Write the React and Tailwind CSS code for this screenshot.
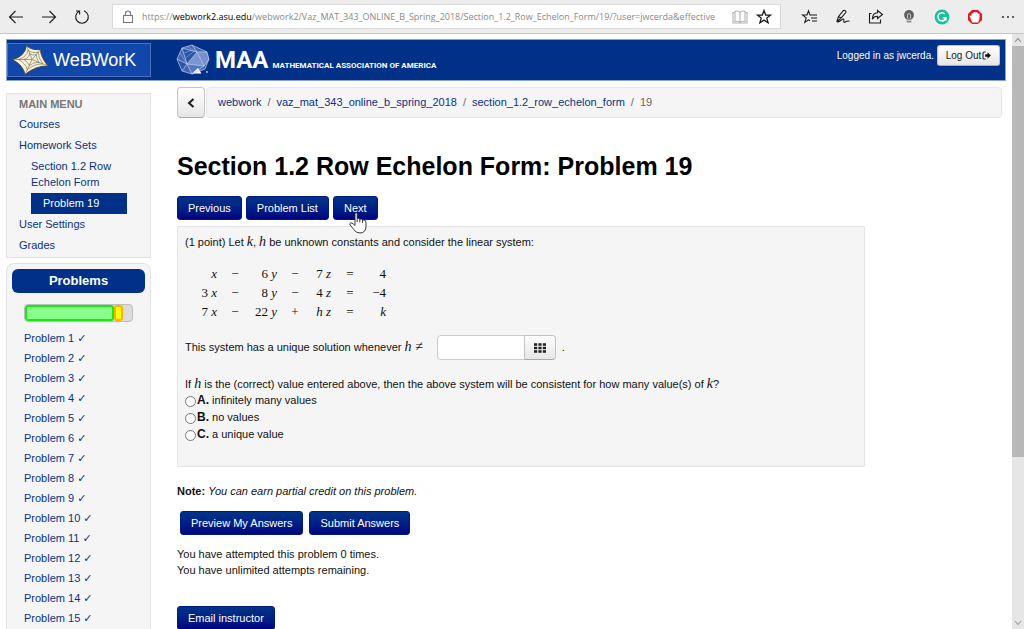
import React from "react";

const primary =
  "h-6 rounded-[3px] border border-[#001a80] bg-linear-to-b from-[#003388] to-[#000080] px-[10px] text-[11px] leading-[22px] text-white";
const light =
  "border border-[#c4c4c4] border-b-[#a8a8a8] bg-linear-to-b from-white to-[#e6e6e6]";

function Icon({ w, h, children, className = "" }) {
  return (
    <svg
      width={w}
      height={h}
      viewBox={`0 0 ${w} ${h}`}
      fill="none"
      stroke="#1c1c1c"
      strokeWidth="1.1"
      aria-hidden="true"
      className={`shrink-0 ${className}`}
    >
      {children}
    </svg>
  );
}

function ToolButton({ label, children }) {
  return (
    <button type="button" aria-label={label} className="flex h-6 w-6 items-center justify-center">
      {children}
    </button>
  );
}

const star = "M8 1.5 L9.7 6 L14.5 6.2 L10.8 9.1 L12.1 13.8 L8 11.1 L3.9 13.8 L5.2 9.1 L1.5 6.2 L6.3 6 Z";

function BrowserBar() {
  return (
    <div className="flex h-[34px] shrink-0 items-center border-b border-[#c6c6c6] bg-[#ededed] pr-1 pl-1">
      <div className="flex w-[108px] items-center gap-[9px]">
        <ToolButton label="Back">
          <Icon w={16} h={16}><path d="M15 8H1.5M7.5 2L1.5 8L7.5 14" /></Icon>
        </ToolButton>
        <ToolButton label="Forward">
          <Icon w={16} h={16}><path d="M1 8H14.5M8.5 2L14.5 8L8.5 14" /></Icon>
        </ToolButton>
        <ToolButton label="Refresh">
          <Icon w={16} h={16}><path d="M5.2 2.3A6.3 6.3 0 1 0 10.8 2.3M2 2H5.6V5.5M10.8 2.3L10 1.6" /></Icon>
        </ToolButton>
      </div>
      <div className="flex h-[25px] min-w-0 flex-1 items-center border border-[#d9d9d9] bg-white pr-1 pl-2">
        <Icon w={14} h={16}>
          <g stroke="#777"><rect x="2.5" y="6.5" width="9" height="7" /><path d="M4.5 6.5V4.5a2.5 2.5 0 0 1 5 0V6.5" /></g>
        </Icon>
        <div className="ml-[7px] min-w-0 flex-1 overflow-hidden font-['Open_Sans',sans-serif] text-[9px] leading-4 whitespace-nowrap text-[#8a8a8a]">
          https://<span className="text-black">webwork2.asu.edu</span>
          /webwork2/Vaz_MAT_343_ONLINE_B_Spring_2018/Section_1.2_Row_Echelon_Form/19/?user=jwcerda&amp;effective
        </div>
        <ToolButton label="Reading view">
          <Icon w={16} h={14}>
            <g stroke="#b5b5b5"><path d="M8 2.5V12.5M8 2.5C6.5 1 4 1 3 1.5V11.5C5 11 7 11.3 8 12.5C9 11.3 11 11 13 11.5V1.5C12 1 9.5 1 8 2.5M3 2.5H1V13H15V2.5H13" /></g>
          </Icon>
        </ToolButton>
        <ToolButton label="Add to favorites"><Icon w={16} h={16}><path d={star} strokeWidth="1.3" /></Icon></ToolButton>
      </div>
      <div className="flex items-center gap-[9px] pl-[17px]">
        <ToolButton label="Favorites">
          <Icon w={18} h={16}>
            <path d="M10 6H9L7.5 1.8L6 6H1.5L5.2 8.9L3.8 13.4L7.5 10.8L9 11.8M10 6H16M10 9H16M11 12H16" />
          </Icon>
        </ToolButton>
        <ToolButton label="Web notes">
          <Icon w={16} h={16}>
            <path d="M2 12L3.5 7.5L8.5 1.5C9.5 .7 11.5 2.2 10.8 3.5L6 9L2 12.5C4 14.5 7 9.5 8.5 10C9.8 10.5 7.8 13.3 9.5 13.2C11 13 11.5 11.5 14.5 12.2M3.5 7.5L6 9" />
          </Icon>
        </ToolButton>
        <ToolButton label="Share">
          <Icon w={16} h={16}>
            <path d="M3.5 4.5H1.5V14H12.5V10.5M9.5 1.5L14.5 5.5L9.5 9.5V7.3C7 7.2 5.3 8.3 4.3 10.3C4.4 6.3 6.5 3.9 9.5 3.8Z" />
          </Icon>
        </ToolButton>
        <ToolButton label="Turn off the lights">
          <Icon w={14} h={16}>
            <circle cx="7" cy="6" r="4.9" fill="#606060" stroke="none" />
            <path d="M4.7 9H9.3V13.5H4.7Z" fill="#888" stroke="none" />
            <path d="M5.5 5.3V9M8.5 5.3V9M5.5 5.3Q7 4 8.5 5.3M4.7 11.5H9.3" stroke="#ddd" strokeWidth=".8" />
          </Icon>
        </ToolButton>
        <ToolButton label="Grammarly">
          <Icon w={16} h={16}>
            <circle cx="8" cy="8" r="7.4" fill="#15c39a" stroke="none" />
            <path d="M11 5A4.1 4.1 0 1 0 12 8.8H8.7M12 8.8V11.5" stroke="#fff" strokeWidth="1.5" />
          </Icon>
        </ToolButton>
        <ToolButton label="Ad blocker">
          <Icon w={16} h={16}>
            <path d="M5 1H11L15 5V11L11 15H5L1 11V5Z" fill="#e8141b" stroke="none" />
            <path d="M5.4 4.5V8.5L4 8L5.8 12.6H10.6L11.6 9V4.8M7.5 3V8.5M9.6 3.3V8.5" fill="#fff" stroke="#fff" strokeWidth="1.9" />
          </Icon>
        </ToolButton>
        <ToolButton label="More">
          <Icon w={16} h={16}>
            <g fill="#1c1c1c" stroke="none"><circle cx="3" cy="8" r=".9" /><circle cx="8" cy="8" r=".9" /><circle cx="13" cy="8" r=".9" /></g>
          </Icon>
        </ToolButton>
      </div>
    </div>
  );
}

function WebLogo() {
  return (
    <svg width="37" height="30" viewBox="0 0 37 30" aria-hidden="true" className="shrink-0">
      <path d="M14.5 .5Q19 5.5 28.5 4.5Q28.5 12 36 21Q24 20.5 13 29.5Q11.5 20.5 .5 14.5Q13 11.5 14.5 .5Z" fill="#f5f0d6" stroke="#45442f" strokeWidth=".9" />
      <g fill="none" stroke="#6d6b52" strokeWidth=".6">
        <path d="M14.5 .5L20 14.5L28.5 4.5M36 21L20 14.5L13 29.5M20 14.5L.5 14.5" />
        <path d="M16 5Q19.5 8.5 26.2 7.2Q26.2 13 31 19Q23 18.5 15.2 24.7Q14 18.5 6.5 14.5Q15 12 16 5Z" />
        <path d="M17.5 8.5Q20 11 24.2 9.6Q24.3 13.5 27 17.3Q22 17 17.2 20.5Q16 17 12 14.5Q17 13 17.5 8.5Z" />
      </g>
    </svg>
  );
}

function MaaLogo() {
  return (
    <svg width="34" height="34" viewBox="0 0 34 34" aria-hidden="true" className="shrink-0">
      <path d="M16 2L31 9L33 16L29 26L16 31L6 28L1 16L6 5Z" fill="#4266b4" />
      <path d="M21 9L31 9L33 16L28 23Z" fill="#7590cf" />
      <path d="M21 9L11 21L28 23Z" fill="#7b96d3" />
      <path d="M11 21L6 5L21 9ZM11 21L1 16L6 28Z" fill="#2b55a8" />
      <path d="M11 21L28 23L16 31Z" fill="#5577bf" />
      <path d="M22 25L25.500 30.500H16Z" fill="#fff" />
      <g fill="none" stroke="#c3d1ee" strokeWidth=".7">
        <path d="M16 2L31 9L33 16L29 26L16 31L6 28L1 16L6 5Z" />
        <path d="M6 5L21 9L16 2M21 9L31 9M21 9L11 21L6 5M11 21L1 16M11 21L6 28M11 21L16 31L28 23L21 9M28 23L33 16M28 23L11 21" />
        <path d="M4 10L11 21M11 3.500L21 9M8 10L15 7.500M9.500 15L18 8.300" strokeWidth=".4" />
      </g>
      <circle cx="31" cy="29" r="1" fill="#a9bce0" />
    </svg>
  );
}

function Banner() {
  return (
    <header className="flex h-[42px] items-center justify-between border border-[#8ba2cc] bg-[#003087] pr-[5px]">
      <div className="flex items-center">
        <a href="#home" className="flex h-[34px] w-36 items-center gap-1 border border-[#4a70be] bg-[#1147ab] pl-1 text-lg text-white">
          <WebLogo />
          WeBWorK
        </a>
        <a href="#maa" className="ml-[25px] flex items-center text-white">
          <MaaLogo />
          <span className="ml-[5px] flex items-baseline gap-1 font-['Roboto','Liberation_Sans',sans-serif] font-bold">
            <span className="text-[24px] leading-[34px]">MAA</span>
            <span className="text-[8px]">MATHEMATICAL ASSOCIATION OF AMERICA</span>
          </span>
        </a>
      </div>
      <div className="mb-[9px] flex items-center gap-[3px] text-[10px] text-white">
        Logged in as jwcerda.
        <button type="button" className={`flex h-[21px] w-[63px] items-center justify-center gap-px rounded-[3px] text-[10px] text-[#222] ${light}`}>
          Log Out
          <Icon w={9} h={9}>
            <path d="M3.7 1H2.3Q1 1 1 2.3V6.7Q1 8 2.3 8H3.7" stroke="#222" />
            <path d="M3.2 3.3H5.5V1.2L8.9 4.5L5.5 7.8V5.7H3.2Z" fill="#111" stroke="none" />
          </Icon>
        </button>
      </div>
    </header>
  );
}

function Sidebar() {
  return (
    <aside className="w-[145px] shrink-0 pt-[6px] text-[11px] text-[#0b3283]">
      <nav aria-label="Main menu" className="border border-[#e3e3e3] bg-[#f5f5f5] pb-px pl-3">
        <h2 className="font-bold leading-[20px] text-[#777]">MAIN MENU</h2>
        <a href="#courses" className="block leading-[21px]">Courses</a>
        <a href="#sets" className="block leading-[21px]">Homework Sets</a>
        <div className="ml-3 pt-[2px]">
          <a href="#set" className="block w-[95px] leading-4">Section 1.2 Row Echelon Form</a>
          <a href="#p19" className="mt-[3px] block w-24 bg-[#003087] pl-3 leading-[21px] text-white">Problem 19</a>
        </div>
        <a href="#settings" className="block leading-[21px]">User Settings</a>
        <a href="#grades" className="block leading-[21px]">Grades</a>
      </nav>
      <section className="mt-[5px] rounded-t-lg border border-[#e3e3e3] bg-[#f5f5f5] px-[5px] pt-[5px] pb-4">
        <h2 className="rounded-md bg-[#003087] text-center text-[13px] leading-6 font-bold text-white">Problems</h2>
        <div className="mx-[12px] mt-[11px] flex h-[18px] overflow-hidden rounded-[4px] border border-[#bdbdbd] bg-[#dcdcdc]">
          <div className="w-5/6 rounded-[3px] border-2 border-[#18e818] bg-[#8aff8a]" />
          <div className="w-[9px] rounded-[3px] border-2 border-[#ffb000] bg-[#ffff00]" />
        </div>
        <ul className="mt-[6px] ml-3">
          {Array.from({ length: 15 }, (_, i) => (
            <li key={i} className="h-5 leading-5">
              <a href={`#problem-${i + 1}`}>
                Problem {i + 1} <span className="font-['DejaVu_Sans',sans-serif] leading-none">✓</span>
              </a>
            </li>
          ))}
        </ul>
      </section>
    </aside>
  );
}

const M = ({ children }) => (
  <i className="font-['Liberation_Serif',serif] text-[14px] leading-4">{children}</i>
);

const system = [
  ["", "x", "−", "6", "y", "−", "7", "z", "4"],
  ["3", "x", "−", "8", "y", "−", "4", "z", "−4"],
  ["7", "x", "−", "22", "y", "+", "h", "z", "k"],
];

function Num({ v }) {
  return /[a-z]/.test(v) ? <i>{v}</i> : v;
}

function LinearSystem() {
  return (
    <table className="mt-[14px] font-['Liberation_Serif',serif] text-[13px] leading-[19px]">
      <tbody>
        {system.map((r, i) => (
          <tr key={i}>
            <td className="w-8 p-0 text-right"><Num v={r[0]} /> <i>{r[1]}</i></td>
            <td className="w-9 p-0 text-center">{r[2]}</td>
            <td className="w-6 p-0 text-right whitespace-nowrap">{r[3]} <i>{r[4]}</i></td>
            <td className="w-9 p-0 text-center">{r[5]}</td>
            <td className="w-[18px] p-0 text-right whitespace-nowrap"><Num v={r[6]} /> <i>{r[7]}</i></td>
            <td className="w-[38px] p-0 text-center">=</td>
            <td className="w-[17px] p-0 text-right whitespace-nowrap"><Num v={r[8]} /></td>
          </tr>
        ))}
      </tbody>
    </table>
  );
}

function HandCursor() {
  return (
    <svg width="18" height="22" viewBox="0 0 18 22" aria-hidden="true" className="pointer-events-none absolute top-4 left-4">
      <path
        d="M6 1.8Q6 .7 7.1 .7Q8.2 .7 8.2 1.8V6.5Q10.2 5.8 10.8 7.2Q12.7 6.5 13.5 8Q16.8 7.3 17 10V14Q17 20.8 11 21Q6.8 21 4.8 17.5L1 12.8Q.3 11.5 1.5 11Q3 10.5 4.5 12.2L6 13.5Z"
        fill="#fff"
        stroke="#222"
        strokeWidth=".9"
      />
      <path d="M8.2 6.5V10M10.8 7.2V10.3M13.5 8V10.8" stroke="#222" strokeWidth=".9" fill="none" />
    </svg>
  );
}

const choices = [
  ["A", "infinitely many values"],
  ["B", "no values"],
  ["C", "a unique value"],
];

function Problem() {
  return (
    <section className="mt-[6px] w-5/6 rounded-[2px] border border-[#e3e3e3] bg-[#f5f5f5] px-[7px] pt-[7px] pb-[23px]">
      <p className="leading-4">
        (1 point) Let <M>k</M>, <M>h</M> be unknown constants and consider the linear system:
      </p>
      <LinearSystem />
      <div className="mt-[14px] flex items-center">
        <label htmlFor="answer">This system has a unique solution whenever <M>h ≠</M></label>
        <div className="ml-[14px] flex">
          <input id="answer" type="text" className="h-[25px] w-[88px] rounded-l-[4px] border border-[#ccc] bg-white px-1" />
          <button type="button" aria-label="Open equation editor" className={`-ml-px flex h-[25px] w-8 items-center justify-center rounded-r-[4px] ${light}`}>
            <Icon w={12} h={10}>
              <path d="M0 1.5H12M0 5H12M0 8.5H12" stroke="#222" strokeWidth="2.4" strokeDasharray="3.2 1.2" />
            </Icon>
          </button>
        </div>
        <span className="ml-[6px]">.</span>
      </div>
      <fieldset className="mt-4">
        <legend className="leading-4">
          If <M>h</M> is the (correct) value entered above, then the above system will be consistent for how many value(s) of <M>k</M>?
        </legend>
        {choices.map(([letter, text]) => (
          <label key={letter} className="flex items-center gap-px leading-[17px]">
            <input type="radio" name="choice" className="m-0 mt-[2px] h-[11px] w-[11px] appearance-none rounded-full border border-[#777] bg-white" />
            <span><b className="text-xs leading-[17px]">{letter}.</b> {text}</span>
          </label>
        ))}
      </fieldset>
    </section>
  );
}

function Main() {
  return (
    <main className="min-w-0 flex-1 pr-[4px] pl-[26px] text-[11px] text-[#111]">
      <div className="flex gap-px">
        <button type="button" aria-label="Go back" className={`flex h-[31px] w-7 items-center justify-center rounded-[4px] ${light}`}>
          <Icon w={8} h={10}><path d="M6.5 1L2 5L6.5 9" strokeWidth="2" /></Icon>
        </button>
        <nav aria-label="Breadcrumb" className="flex h-[31px] flex-1 items-center gap-[6px] rounded-[4px] border border-[#e5e5e5] bg-[#f5f5f5] pl-[11px] text-[#0b3283]">
          <a href="#webwork">webwork</a>
          <span className="text-[#666]">/</span>
          <a href="#course">vaz_mat_343_online_b_spring_2018</a>
          <span className="text-[#666]">/</span>
          <a href="#set">section_1.2_row_echelon_form</a>
          <span className="text-[#666]">/</span>
          <span className="text-[#666]">19</span>
        </nav>
      </div>
      <h1 className="mt-8 text-[25px] leading-8 font-bold text-black">Section 1.2 Row Echelon Form: Problem 19</h1>
      <div className="mt-[14px] flex gap-1">
        <button type="button" className={primary}>Previous</button>
        <button type="button" className={primary}>Problem List</button>
        <div className="relative flex">
          <button type="button" className={primary}>Next</button>
          <HandCursor />
        </div>
      </div>
      <Problem />
      <p className="mt-4 leading-4"><b>Note:</b> <i>You can earn partial credit on this problem.</i></p>
      <div className="mt-[12px] ml-[3px] flex gap-[6px]">
        <button type="button" className={primary}>Preview My Answers</button>
        <button type="button" className={primary}>Submit Answers</button>
      </div>
      <p className="mt-[11px] leading-4">
        You have attempted this problem 0 times.
        <br />
        You have unlimited attempts remaining.
      </p>
      <button type="button" className={`mt-7 ${primary}`}>Email instructor</button>
    </main>
  );
}

export default function App() {
  return (
    <div className="flex h-screen flex-col overflow-hidden bg-white font-['Liberation_Sans',Arial,sans-serif]">
      <BrowserBar />
      <div className="flex min-h-0 flex-1">
        <div className="min-w-0 flex-1 overflow-hidden px-[6px] pt-[5px]">
          <Banner />
          <div className="mt-[6px] flex">
            <Sidebar />
            <Main />
          </div>
        </div>
        <div className="flex w-3 shrink-0 flex-col items-center bg-[#e6e6e6]" aria-hidden="true">
          <Icon w={8} h={12}><path d="M1 8L4 4.5L7 8" stroke="#888" /></Icon>
          <div className="h-[69%] w-full bg-[#b8b8b8]" />
          <Icon w={8} h={12} className="mt-auto"><path d="M1 4L4 7.5L7 4" stroke="#999" /></Icon>
        </div>
      </div>
    </div>
  );
}
